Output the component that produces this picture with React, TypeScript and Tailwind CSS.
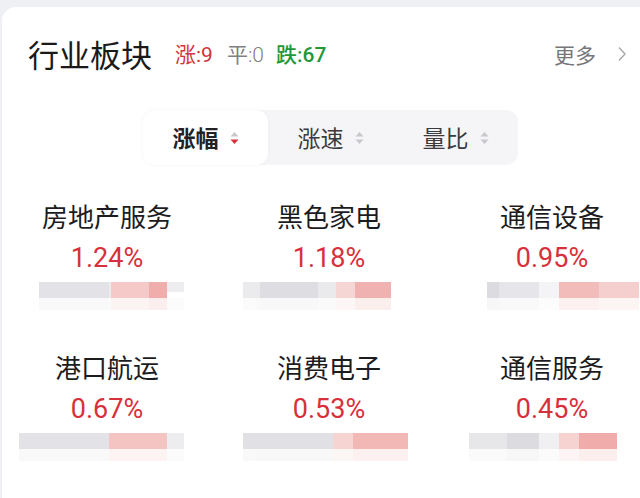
import React from 'react';

type Seg = { w: number; c: string; h?: number };

interface Sector {
  name: string;
  pct: string;
  offset: number;
  bar: Seg[];
}

const sectors: Sector[] = [
  {
    name: '房地产服务',
    pct: '1.24%',
    offset: -68,
    bar: [
      { w: 70, c: '#e3e3e7' },
      { w: 2, c: '#ececef' },
      { w: 38, c: '#f4c9c7' },
      { w: 18, c: '#efadac' },
      { w: 17, c: '#ededf0', h: 10 },
    ],
  },
  {
    name: '黑色家电',
    pct: '1.18%',
    offset: -86,
    bar: [
      { w: 17, c: '#ebebee' },
      { w: 58, c: '#dedee2' },
      { w: 18, c: '#eaeaed' },
      { w: 19, c: '#f6d6d4' },
      { w: 36, c: '#f0b2b0' },
    ],
  },
  {
    name: '通信设备',
    pct: '0.95%',
    offset: -65,
    bar: [
      { w: 12, c: '#dcdce0' },
      { w: 40, c: '#e6e6ea' },
      { w: 20, c: '#f4f4f6' },
      { w: 40, c: '#f2bcba' },
      { w: 40, c: '#f5cfcd' },
    ],
  },
  {
    name: '港口航运',
    pct: '0.67%',
    offset: -88,
    bar: [
      { w: 90, c: '#e3e3e7' },
      { w: 58, c: '#f3c4c2' },
      { w: 17, c: '#ededf0' },
    ],
  },
  {
    name: '消费电子',
    pct: '0.53%',
    offset: -86,
    bar: [
      { w: 90, c: '#e1e1e5' },
      { w: 20, c: '#f5d4d2' },
      { w: 55, c: '#f1b8b6' },
    ],
  },
  {
    name: '通信服务',
    pct: '0.45%',
    offset: -83,
    bar: [
      { w: 38, c: '#e7e7ea' },
      { w: 32, c: '#dcdce0' },
      { w: 20, c: '#f0f0f3' },
      { w: 20, c: '#f6d2d0' },
      { w: 38, c: '#efacab' },
    ],
  },
];

const cjk = "font-['Noto_Sans_CJK_SC',sans-serif]";

function SortIcon({ active }: { active?: boolean }) {
  return (
    <svg width="9" height="14" viewBox="0 0 9 14" className="ml-[11px]">
      <path d="M4.5 1 L8.5 5.5 L0.5 5.5 Z" fill="#c8c8cc" />
      <path d="M4.5 13 L8.5 8.5 L0.5 8.5 Z" fill={active ? '#d8303a' : '#c8c8cc'} />
    </svg>
  );
}

function Bar({ segs, offset }: { segs: Seg[]; offset: number }) {
  return (
    <div className="relative h-[28px] w-full">
      <div className="absolute top-0 left-1/2 flex flex-col" style={{ marginLeft: offset }}>
        <div className="flex h-[16px] items-start">
          {segs.map((s, i) => (
            <div key={i} style={{ width: s.w, height: s.h ?? 16, background: s.c }} />
          ))}
        </div>
        <div className="flex h-[12px] opacity-20">
          {segs.map((s, i) => (
            <div key={i} style={{ width: s.w, background: s.c }} />
          ))}
        </div>
      </div>
    </div>
  );
}

export default function App() {
  return (
    <div className="h-[498px] w-[640px] overflow-hidden bg-[#eef0f4] pt-[7px] pl-[2px]">
      <div className="h-full overflow-hidden rounded-tl-[14px] bg-white">
        {/* header */}
        <div className="flex items-center pt-[28px] pl-[26px] pr-[12px]">
          <span className={`${cjk} text-[31px] leading-[36px] text-[#1a1a1a]`}>行业板块</span>
          <span className={`${cjk} ml-[23px] text-[21px] leading-[36px] text-[#d23440]`}>
            涨<span className="font-['Roboto']">:9</span>
          </span>
          <span className={`${cjk} ml-[14px] text-[21px] leading-[36px] text-[#808084]`}>
            平<span className="font-['Roboto'] font-light">:0</span>
          </span>
          <span className={`${cjk} ml-[12px] text-[21px] leading-[36px] font-medium text-[#23983a]`}>
            跌<span className="font-['Roboto']">:67</span>
          </span>
          <span className={`${cjk} ml-auto text-[21px] leading-[36px] text-[#76767a]`}>更多</span>
          <svg width="10" height="16" viewBox="0 0 10 16" className="ml-[21px] mr-[1px]">
            <path d="M2 1.5 L8 8 L2 14.5" fill="none" stroke="#a8a8ac" strokeWidth="1.4" />
          </svg>
        </div>

        {/* tabs */}
        <div className="mt-[37px] flex pl-[141px]">
          <div className="flex h-[55px] w-[375px] rounded-[12px] bg-[#f5f5f8]">
            <div className="flex w-[125px] items-center justify-center rounded-[12px] bg-white shadow-[0_0_4px_rgba(0,0,0,0.04)]">
              <span className={`${cjk} text-[23px] font-bold text-[#222226]`}>涨幅</span>
              <SortIcon active />
            </div>
            <div className="flex w-[125px] items-center justify-center">
              <span className={`${cjk} text-[23px] text-[#3a3a40]`}>涨速</span>
              <SortIcon />
            </div>
            <div className="flex w-[125px] items-center justify-center">
              <span className={`${cjk} text-[23px] text-[#3a3a40]`}>量比</span>
              <SortIcon />
            </div>
          </div>
        </div>

        {/* sectors grid */}
        <div className="mt-[35px] grid w-[660px] grid-cols-[214px_230px_216px] gap-y-[41px] -ml-[2px]">
          {sectors.map((s) => (
            <div key={s.name} className="flex flex-col items-center">
              <span className={`${cjk} text-[26px] leading-[32px] text-[#1c1c1e]`}>{s.name}</span>
              <span className="mt-[10px] font-['Roboto'] text-[27px] leading-[32px] text-[#d8303a]">{s.pct}</span>
              <div className="mt-[8px] w-full">
                <Bar segs={s.bar} offset={s.offset} />
              </div>
            </div>
          ))}
        </div>
      </div>
    </div>
  );
}
